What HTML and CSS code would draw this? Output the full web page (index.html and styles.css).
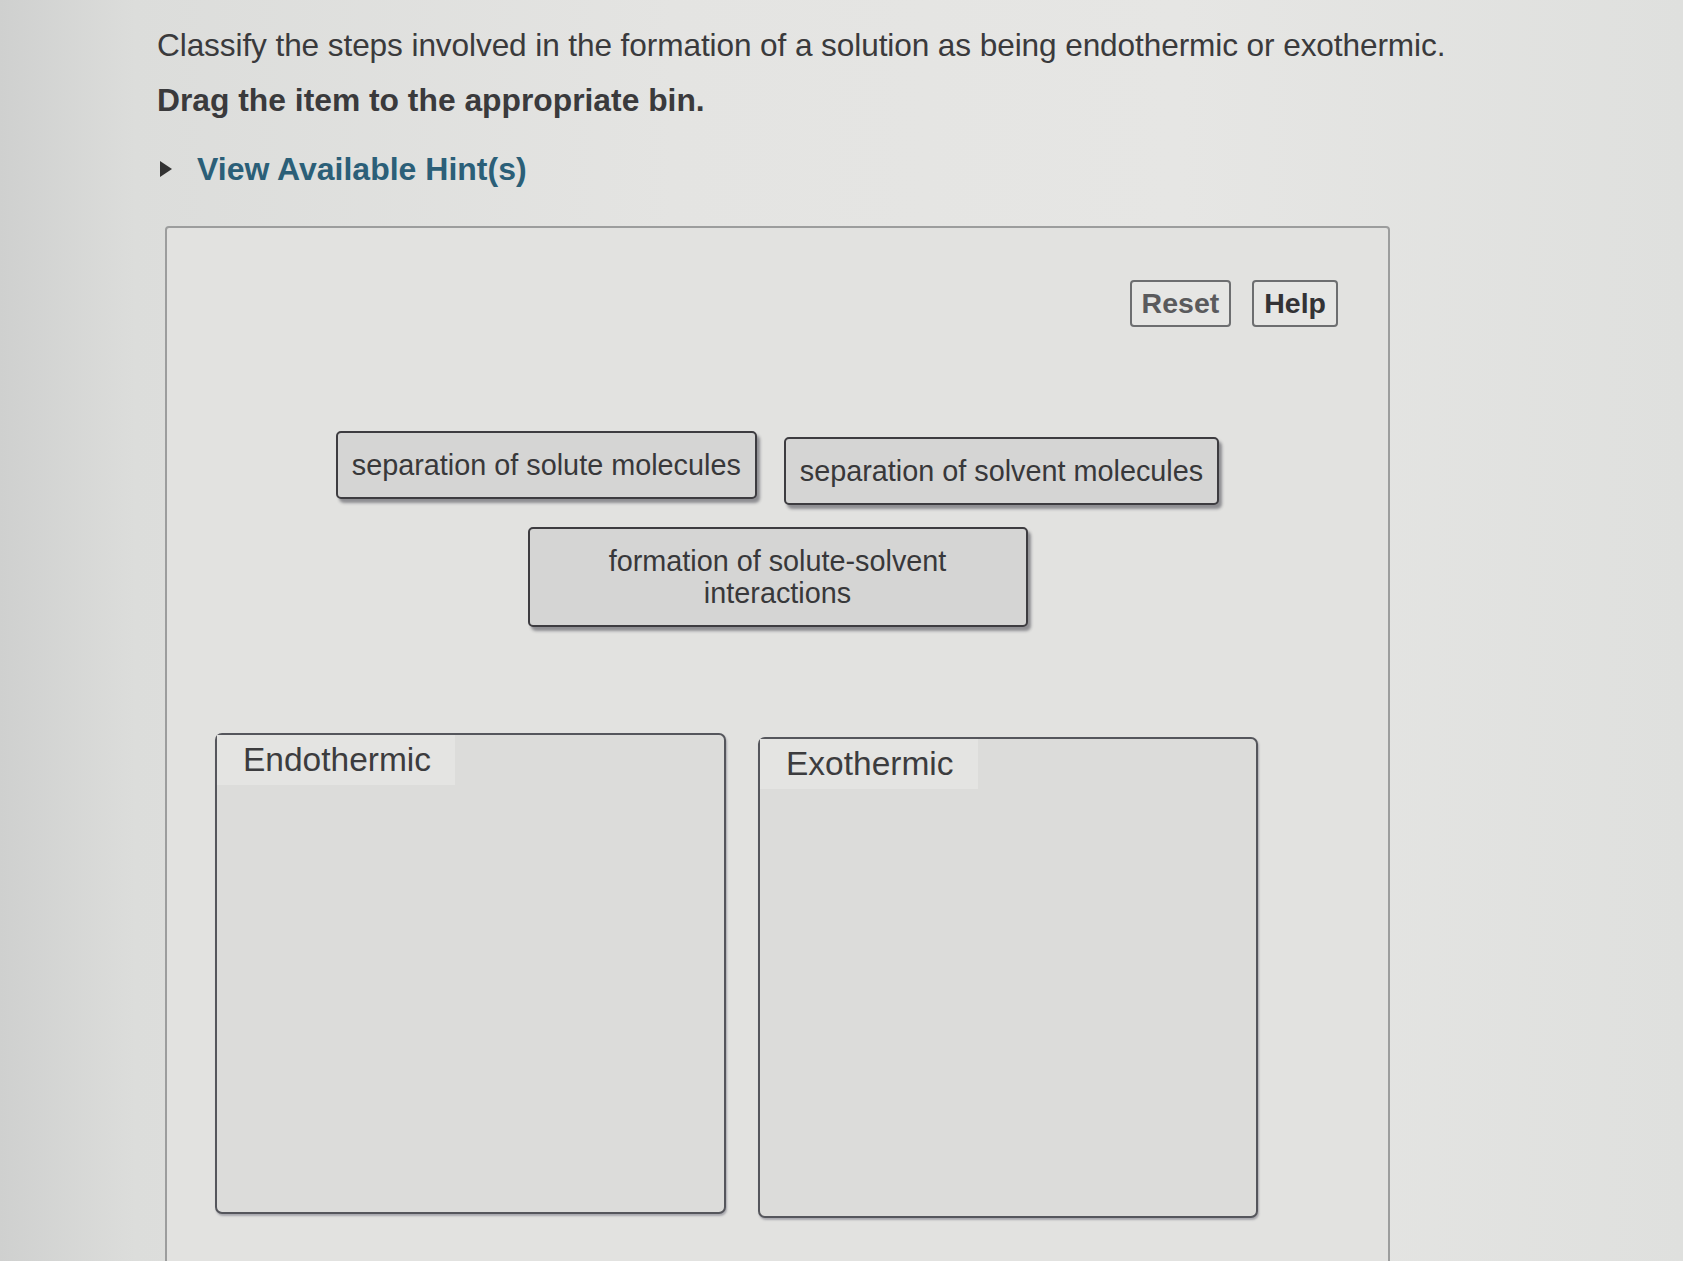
FILE: index.html
```html
<!DOCTYPE html>
<html lang="en">
<head>
<meta charset="utf-8">
<title>Classify the steps</title>
<link rel="stylesheet" href="styles.css">
</head>
<body>
<div class="page">
  <p class="question">Classify the steps involved in the formation of a solution as being endothermic or exothermic.</p>
  <p class="instruction">Drag the item to the appropriate bin.</p>
  <div class="hint">
    <svg class="hint-arrow" width="14" height="20" viewBox="0 0 14 20"><polygon points="1,2 13,10 1,18" fill="#333"/></svg>
    <span>View Available Hint(s)</span>
  </div>
  <div class="panel">
    <div class="toolbar">
      <button class="btn btn-reset">Reset</button>
      <button class="btn btn-help">Help</button>
    </div>
    <div class="items">
      <div class="item-row">
        <div class="item">separation of solute molecules</div>
        <div class="item item-b">separation of solvent molecules</div>
      </div>
      <div class="item-row">
        <div class="item item-wide">formation of solute-solvent<br>interactions</div>
      </div>
    </div>
    <div class="bins">
      <div class="bin bin-endo"><div class="bin-label">Endothermic</div></div>
      <div class="bin bin-exo"><div class="bin-label">Exothermic</div></div>
    </div>
  </div>
</div>
</body>
</html>
```

FILE: styles.css
```css
html, body {
  margin: 0;
  height: 100%;
  overflow: hidden;
}
body {
  background: linear-gradient(90deg, #cfd0cf 0, #dcdddb 8%, #e4e4e2 40%, #e6e6e4 70%, #dfe0de 100%);
  font-family: "Liberation Sans", Arial, sans-serif;
  color: #3a3a3c;
}
.page {
  padding: 27px 0 0 157px;
}
.question {
  margin: 0;
  font-size: 31.6px;
  line-height: 36px;
  letter-spacing: -0.1px;
}
.instruction {
  margin: 19px 0 0;
  font-size: 31.8px;
  line-height: 36px;
  font-weight: bold;
}
.hint {
  margin-top: 32px;
  display: flex;
  align-items: center;
  gap: 24px;
  color: #2b5f78;
  font-size: 32px;
  font-weight: bold;
  line-height: 38px;
}
.hint-arrow {
  margin-left: 2px;
}
.panel {
  margin: 38px 0 0 8px;
  width: 1225px;
  height: 1100px;
  border: 2px solid #9c9d9d;
  border-radius: 4px;
  background: #e2e2e0;
  box-sizing: border-box;
}
.toolbar {
  display: flex;
  justify-content: flex-end;
  gap: 21px;
  padding: 52px 50px 0 0;
}
.btn {
  font-family: "Liberation Sans", Arial, sans-serif;
  font-weight: bold;
  font-size: 28.5px;
  line-height: 32px;
  padding: 5px 10px 6px;
  background: #e6e6e4;
  border: 2px solid #6d6e70;
  border-radius: 4px;
}
.btn-reset { color: #5a5a5c; }
.btn-help { color: #333235; }
.items {
  margin-top: 104px;
  display: flex;
  flex-direction: column;
  align-items: center;
  gap: 22px;
}
.item-row {
  display: flex;
  gap: 27px;
  align-items: flex-start;
}
.item {
  background: #d5d5d4;
  border: 2px solid #3d3c40;
  border-radius: 5px;
  box-shadow: 3px 4px 3px rgba(40, 40, 50, 0.45);
  font-size: 28.8px;
  line-height: 32px;
  padding: 16px 14px;
  color: #38383a;
}
.item-b {
  margin-top: 6px;
}
.item-wide {
  width: 500px;
  box-sizing: border-box;
  text-align: center;
  padding: 16px 14px;
}
.bins {
  display: flex;
  gap: 32px;
  padding-left: 48px;
  margin-top: 106px;
  align-items: flex-start;
}
.bin {
  height: 481px;
  border: 2px solid #55565c;
  border-radius: 7px;
  background: #dcdcda;
  box-sizing: border-box;
  box-shadow: 1px 2px 2px rgba(60, 60, 80, 0.35);
}
.bin-endo { width: 511px; }
.bin-exo { width: 500px; margin-top: 4px; }
.bin-label {
  display: inline-block;
  background: #e4e4e2;
  font-size: 33.5px;
  line-height: 38px;
  padding: 6px 24px 6px 26px;
  color: #3c3c3e;
}
```
